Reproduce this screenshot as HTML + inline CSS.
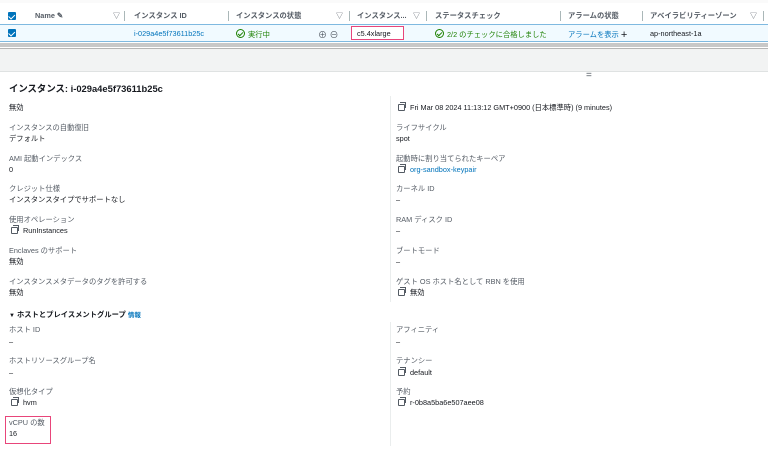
<!DOCTYPE html>
<html><head><meta charset="utf-8"><style>
*{margin:0;padding:0;box-sizing:border-box}
body{width:768px;height:451px;overflow:hidden;background:#fff;font-family:"Liberation Sans","Noto Sans CJK JP",sans-serif;color:#16191f;position:relative;font-size:7.3px}
.a{position:absolute;white-space:nowrap}
.l{color:#545b64}
.h{font-weight:bold;color:#545b64}
.lk{color:#0073bb}
.g{color:#1d8102}
.cb{position:absolute;width:8px;height:8px;background:#0073bb;border-radius:1px}
.cb:after{content:"";position:absolute;left:2px;top:0.5px;width:2.5px;height:4.5px;border:solid #fff;border-width:0 1.3px 1.3px 0;transform:rotate(45deg)}
.sep{position:absolute;width:1px;height:10px;background:#aab7b8;top:11px}
.ci{display:inline-block;width:7px;height:7px;border:1px solid #545b64;position:relative;margin-right:5px;vertical-align:-1px;border-radius:1px}
.ci:before{content:"";position:absolute;left:1px;top:-3px;width:5px;height:5px;border-top:1px solid #545b64;border-right:1px solid #545b64}
.ok{display:inline-block;width:9px;height:9px;border:1.2px solid #1d8102;border-radius:50%;vertical-align:-1px;margin-right:3px;position:relative}
.ok:after{content:"";position:absolute;left:2.3px;top:0.6px;width:2px;height:4px;border:solid #1d8102;border-width:0 1.2px 1.2px 0;transform:rotate(45deg)}
</style></head><body>
<div class="a" style="left:0;top:0;width:768px;height:3px;background:#fafafa"></div>
<div class="cb" style="left:8px;top:12px"></div>
<div class="a h" style="left:35px;top:11px">Name ✎</div>
<div class="a l" style="left:113px;top:11px;font-size:7px">▽</div>
<div class="sep" style="left:124px"></div>
<div class="a h" style="left:134px;top:11px">インスタンス ID</div>
<div class="sep" style="left:228px"></div>
<div class="a h" style="left:236px;top:11px">インスタンスの状態</div>
<div class="a l" style="left:336px;top:11px;font-size:7px">▽</div>
<div class="sep" style="left:349px"></div>
<div class="a h" style="left:357px;top:11px">インスタンス...</div>
<div class="a l" style="left:413px;top:11px;font-size:7px">▽</div>
<div class="sep" style="left:426px"></div>
<div class="a h" style="left:435px;top:11px">ステータスチェック</div>
<div class="sep" style="left:560px"></div>
<div class="a h" style="left:568px;top:11px">アラームの状態</div>
<div class="sep" style="left:642px"></div>
<div class="a h" style="left:650px;top:11px">アベイラビリティーゾーン</div>
<div class="a l" style="left:750px;top:11px;font-size:7px">▽</div>
<div class="sep" style="left:763px"></div>
<div class="a" style="left:0;top:24px;width:768px;height:18px;background:#f1faff;border-top:1px solid #7fb9e0;border-bottom:1px solid #7fb9e0"></div>
<div class="cb" style="left:8px;top:29px"></div>
<div class="a lk" style="left:134px;top:29px">i-029a4e5f73611b25c</div>
<div class="a g" style="left:236px;top:29px"><span class="ok"></span>実行中</div>
<div class="a l" style="left:318px;top:28px;font-size:9px">⊕ ⊖</div>
<div class="a" style="left:351px;top:26px;width:53px;height:14px;border:1.5px solid #e8457a;background:#fff"></div>
<div class="a" style="left:357px;top:29px">c5.4xlarge</div>
<div class="a g" style="left:435px;top:29px"><span class="ok"></span>2/2 のチェックに合格しました</div>
<div class="a lk" style="left:568px;top:29px">アラームを表示 <span style="color:#16191f;font-size:11px;vertical-align:-1px">+</span></div>
<div class="a" style="left:650px;top:29px">ap-northeast-1a</div>
<div class="a" style="left:0;top:43px;width:768px;height:4px;background:#c8c8c8"></div>
<div class="a" style="left:0;top:48px;width:768px;height:1px;background:#b5b5b5"></div>
<div class="a" style="left:0;top:49px;width:768px;height:23px;background:#f2f3f3;border-bottom:1px solid #dfe2e2"></div>
<div class="a l" style="left:586px;top:70px;font-size:10px">=</div>
<div class="a" style="left:9px;top:81px;font-size:9.4px;font-weight:bold">インスタンス: i-029a4e5f73611b25c</div>
<div class="a" style="left:390px;top:96px;width:1px;height:206px;background:#eaeded"></div>
<div class="a" style="left:390px;top:322px;width:1px;height:124px;background:#eaeded"></div>
<div class="a" style="left:9px;top:103px">無効</div>
<div class="a l" style="left:9px;top:123px">インスタンスの自動復旧</div>
<div class="a" style="left:9px;top:134px">デフォルト</div>
<div class="a l" style="left:9px;top:154px">AMI 起動インデックス</div>
<div class="a" style="left:9px;top:165px">0</div>
<div class="a l" style="left:9px;top:184px">クレジット仕様</div>
<div class="a" style="left:9px;top:195px">インスタンスタイプでサポートなし</div>
<div class="a l" style="left:9px;top:215px">使用オペレーション</div>
<div class="a" style="left:11px;top:226px"><span class="ci"></span>RunInstances</div>
<div class="a l" style="left:9px;top:246px">Enclaves のサポート</div>
<div class="a" style="left:9px;top:257px">無効</div>
<div class="a l" style="left:9px;top:277px">インスタンスメタデータのタグを許可する</div>
<div class="a" style="left:9px;top:288px">無効</div>
<div class="a h" style="left:9px;top:309px;color:#16191f"><span style="font-size:6px">▼</span> ホストとプレイスメントグループ <span class="lk" style="font-size:6.5px">情報</span></div>
<div class="a l" style="left:9px;top:325px">ホスト ID</div>
<div class="a" style="left:9px;top:337px">–</div>
<div class="a l" style="left:9px;top:356px">ホストリソースグループ名</div>
<div class="a" style="left:9px;top:368px">–</div>
<div class="a l" style="left:9px;top:387px">仮想化タイプ</div>
<div class="a" style="left:11px;top:398px"><span class="ci"></span>hvm</div>
<div class="a" style="left:5px;top:416px;width:46px;height:28px;border:1.5px solid #e8457a"></div>
<div class="a l" style="left:9px;top:418px">vCPU の数</div>
<div class="a" style="left:9px;top:429px">16</div>
<div class="a" style="left:398px;top:103px"><span class="ci"></span>Fri Mar 08 2024 11:13:12 GMT+0900 (日本標準時) (9 minutes)</div>
<div class="a l" style="left:396px;top:123px">ライフサイクル</div>
<div class="a" style="left:396px;top:134px">spot</div>
<div class="a l" style="left:396px;top:154px">起動時に割り当てられたキーペア</div>
<div class="a lk" style="left:398px;top:165px"><span class="ci"></span>org-sandbox-keypair</div>
<div class="a l" style="left:396px;top:184px">カーネル ID</div>
<div class="a" style="left:396px;top:195px">–</div>
<div class="a l" style="left:396px;top:215px">RAM ディスク ID</div>
<div class="a" style="left:396px;top:226px">–</div>
<div class="a l" style="left:396px;top:246px">ブートモード</div>
<div class="a" style="left:396px;top:257px">–</div>
<div class="a l" style="left:396px;top:277px">ゲスト OS ホスト名として RBN を使用</div>
<div class="a" style="left:398px;top:288px"><span class="ci"></span>無効</div>
<div class="a l" style="left:396px;top:325px">アフィニティ</div>
<div class="a" style="left:396px;top:337px">–</div>
<div class="a l" style="left:396px;top:356px">テナンシー</div>
<div class="a" style="left:398px;top:368px"><span class="ci"></span>default</div>
<div class="a l" style="left:396px;top:387px">予約</div>
<div class="a" style="left:398px;top:398px"><span class="ci"></span>r-0b8a5ba6e507aee08</div>
</body></html>
